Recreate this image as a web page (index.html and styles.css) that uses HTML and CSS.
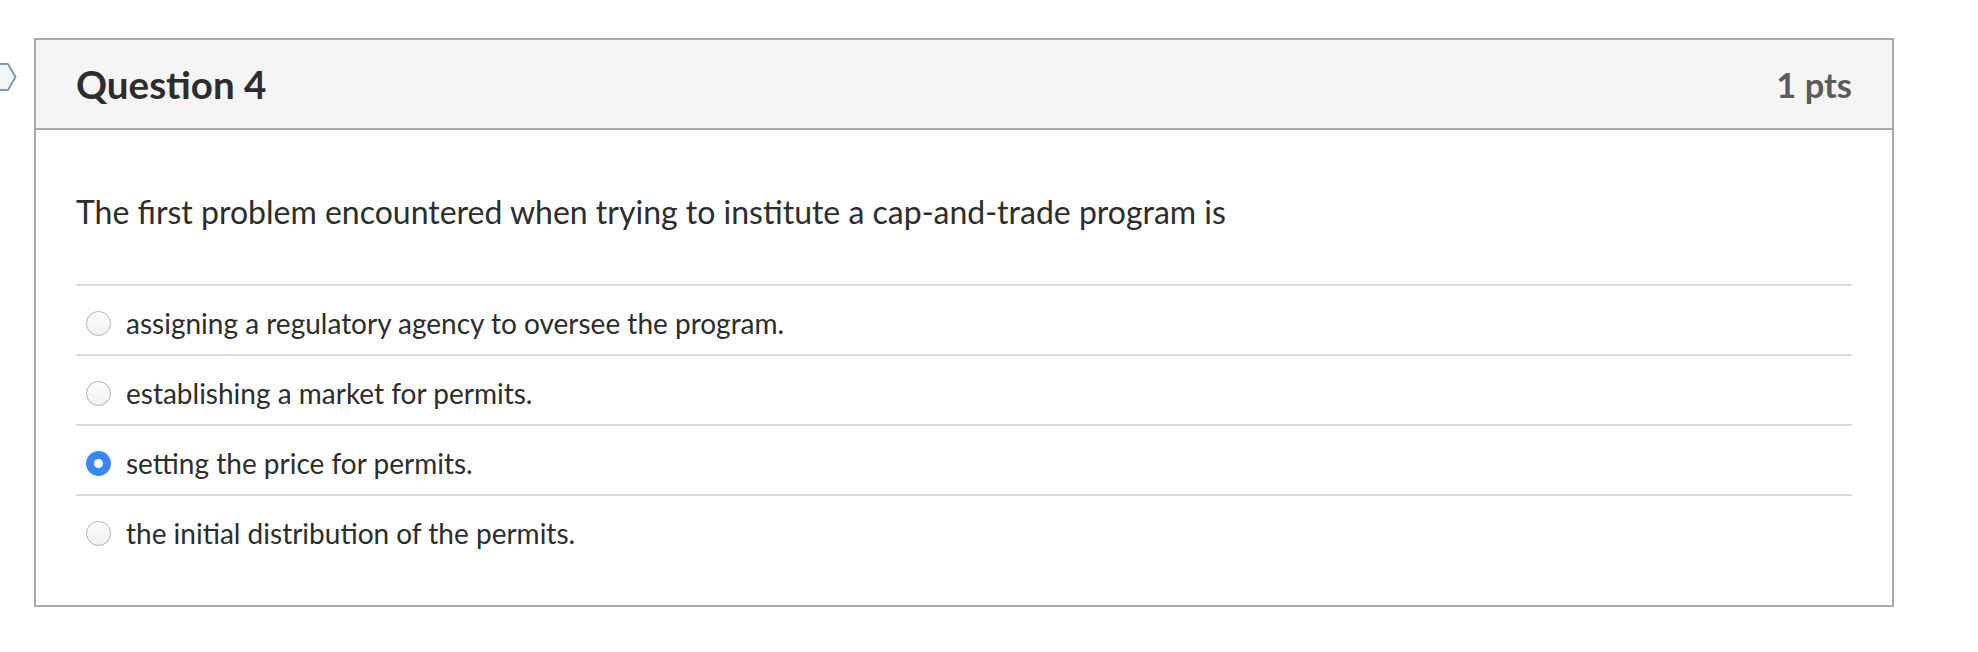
FILE: index.html
```html
<!DOCTYPE html>
<html lang="en">
<head>
<meta charset="utf-8">
<title>Question 4</title>
<link rel="stylesheet" href="styles.css">
</head>
<body>
<div class="page">
  <div class="flag-col">
    <svg class="flag" width="18" height="30" viewBox="0 0 18 30" aria-hidden="true">
      <polygon points="-4,1 8,1 15.5,14 8,27 -4,27" fill="#f4f7fa" stroke="#7f9cb6" stroke-width="2" stroke-linejoin="round"/>
    </svg>
  </div>
  <div class="question">
    <div class="q-header">
      <h2 class="q-title">Question 4</h2>
      <span class="q-pts">1 pts</span>
    </div>
    <div class="q-body">
      <p class="q-text">The first problem encountered when trying to institute a cap-and-trade program is</p>
      <div class="answers">
        <label class="answer"><span class="radio"></span><span class="answer-text">assigning a regulatory agency to oversee the program.</span></label>
        <label class="answer"><span class="radio"></span><span class="answer-text">establishing a market for permits.</span></label>
        <label class="answer"><span class="radio radio-checked"></span><span class="answer-text">setting the price for permits.</span></label>
        <label class="answer"><span class="radio"></span><span class="answer-text">the initial distribution of the permits.</span></label>
      </div>
    </div>
  </div>
</div>
</body>
</html>
```

FILE: styles.css
```css
html, body {
  margin: 0;
  padding: 0;
  background: #ffffff;
}

body {
  font-family: Lato, "Open Sans", "Liberation Sans", sans-serif;
  color: #2d2d2d;
}

.page {
  display: flex;
  align-items: flex-start;
  padding-top: 38px;
}

.flag-col {
  width: 34px;
  flex: 0 0 34px;
  padding-top: 25px;
}

.flag {
  display: block;
}

.question {
  width: 1856px;
  border: 2px solid #a9a9a9;
  box-sizing: content-box;
}

.q-header {
  height: 88px;
  background: #f5f5f5;
  border-bottom: 2px solid #a9a9a9;
  padding: 0 40px;
  display: flex;
  align-items: center;
  justify-content: space-between;
}

.q-title {
  margin: 0;
  font-size: 38.5px;
  font-weight: 700;
  color: #2d2d2d;
}

.q-pts {
  font-size: 34.5px;
  font-weight: 700;
  color: #5b5b5b;
}

.q-body {
  padding: 62px 40px 41px;
}

.q-text {
  margin: 0 0 52px;
  font-size: 32px;
  line-height: 40px;
  color: #2d2d2d;
}

.answer {
  display: flex;
  align-items: center;
  border-top: 2px solid #dcdcdc;
  padding: 19px 0 13px 10px;
  height: 36px;
  box-sizing: content-box;
}

.radio {
  width: 25px;
  height: 25px;
  border-radius: 50%;
  box-sizing: border-box;
  border: 1px solid #b3b3b3;
  background: linear-gradient(#ffffff, #f0f0f0);
  flex: 0 0 auto;
  margin-right: 15px;
  display: flex;
  align-items: center;
  justify-content: center;
}

.radio-checked {
  border: none;
  background: #3b86f5;
}

.radio-checked::after {
  content: "";
  width: 9px;
  height: 9px;
  border-radius: 50%;
  background: #ffffff;
}

.answer-text {
  font-size: 28px;
  color: #2d2d2d;
}
```
